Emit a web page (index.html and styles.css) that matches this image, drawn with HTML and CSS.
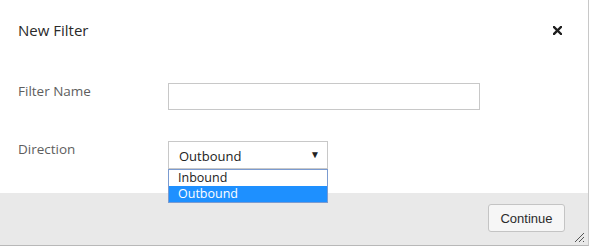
FILE: index.html
```html
<!DOCTYPE html>
<html lang="en">
<head>
    <meta charset="UTF-8">
    <title>New Filter</title>
    <link rel="stylesheet" href="styles.css">
</head>
<body>
    <!-- dialog -->
    <div class="dialog">
        <div class="dialog-header">
            <h2>New Filter</h2>
            <span class="close">
                <svg width="9" height="9" viewBox="0 0 9 9"><path d="M1 1L8 8M8 1L1 8" stroke="#1e1e1e" stroke-width="2.4" stroke-linecap="square"/></svg>
            </span>
        </div>

        <div class="dialog-body">
            <div class="form-row">
                <label>Filter Name</label>
                <input type="text" class="text-input">
            </div>
            <div class="form-row">
                <label>Direction</label>
                <div class="select-wrap">
                    <div class="select-box">
                        <span>Outbound</span>
                        <span class="arrow">&#9660;</span>
                    </div>
                    <ul class="select-list">
                        <li>Inbound</li>
                        <li class="selected">Outbound</li>
                    </ul>
                </div>
            </div>
        </div>

        <div class="dialog-footer">
            <button class="btn">Continue</button>
            <svg class="grip" width="12" height="12" viewBox="0 0 12 12"><path d="M11 2L2 11M11 6L6 11M11 10L10 11" stroke="#555" stroke-width="1"/></svg>
        </div>
    </div>
</body>
</html>
```

FILE: styles.css
```css
* {
    margin: 0;
    padding: 0;
    box-sizing: border-box;
}

body {
    font-family: 'Open Sans', 'Noto Sans', sans-serif;
    color: #333;
    background: #fff;
}

.dialog {
    width: 589px;
    height: 246px;
    border-right: 1px solid #c8c8c8;
    border-bottom: 1px solid #b8b8b8;
    display: flex;
    flex-direction: column;
    background: #fff;
}

/* header */
.dialog-header {
    height: 60px;
    display: flex;
    justify-content: space-between;
    align-items: flex-start;
    padding: 20px 25px 0 18px;
}

.dialog-header h2 {
    font-size: 15px;
    font-weight: 400;
    line-height: 20px;
    color: #2a2a2a;
}

.close {
    margin-top: -2px;
    margin-right: 1px;
}

/* body */
.dialog-body {
    flex: 1;
    padding: 23px 0 0 18px;
    display: flex;
    flex-direction: column;
    gap: 31px;
}

.form-row {
    display: flex;
    align-items: flex-start;
}

.form-row label {
    width: 150px;
    font-size: 13.5px;
    line-height: 16px;
    color: #5e5e5e;
}

.text-input {
    width: 312px;
    height: 27px;
    border: 1px solid #c8c8c8;
    background: #fff;
    outline: none;
}

.select-wrap {
    position: relative;
    width: 160px;
}

.select-box {
    height: 28px;
    border: 1px solid #c8c8c8;
    display: flex;
    justify-content: space-between;
    align-items: center;
    padding: 1px 7px 0 10px;
    font-size: 13px;
    color: #222;
}

.select-box .arrow {
    font-size: 10px;
    color: #222;
    margin-top: -3px;
}

.select-list {
    position: absolute;
    top: 28px;
    left: 0;
    width: 160px;
    list-style: none;
    border: 1px solid #7b9bd0;
    background: #fff;
    z-index: 10;
}

.select-list li {
    font-size: 12.5px;
    line-height: 16px;
    height: 16px;
    padding-left: 9px;
    color: #222;
}

.select-list li.selected {
    background: #1e90ff;
    color: #fff;
}

/* footer */
.dialog-footer {
    height: 52px;
    background: #e9e9e9;
    display: flex;
    justify-content: flex-end;
    align-items: flex-start;
    padding: 11px 0 0 0;
    position: relative;
}

.btn {
    width: 77px;
    height: 28px;
    margin-right: 23px;
    font-family: 'Liberation Sans', Arial, sans-serif;
    font-size: 13px;
    color: #2b2b2b;
    background: #f6f6f6;
    border: 1px solid #c4c4c4;
    border-radius: 3px;
}

.grip {
    position: absolute;
    right: 3px;
    bottom: 2px;
}
```
